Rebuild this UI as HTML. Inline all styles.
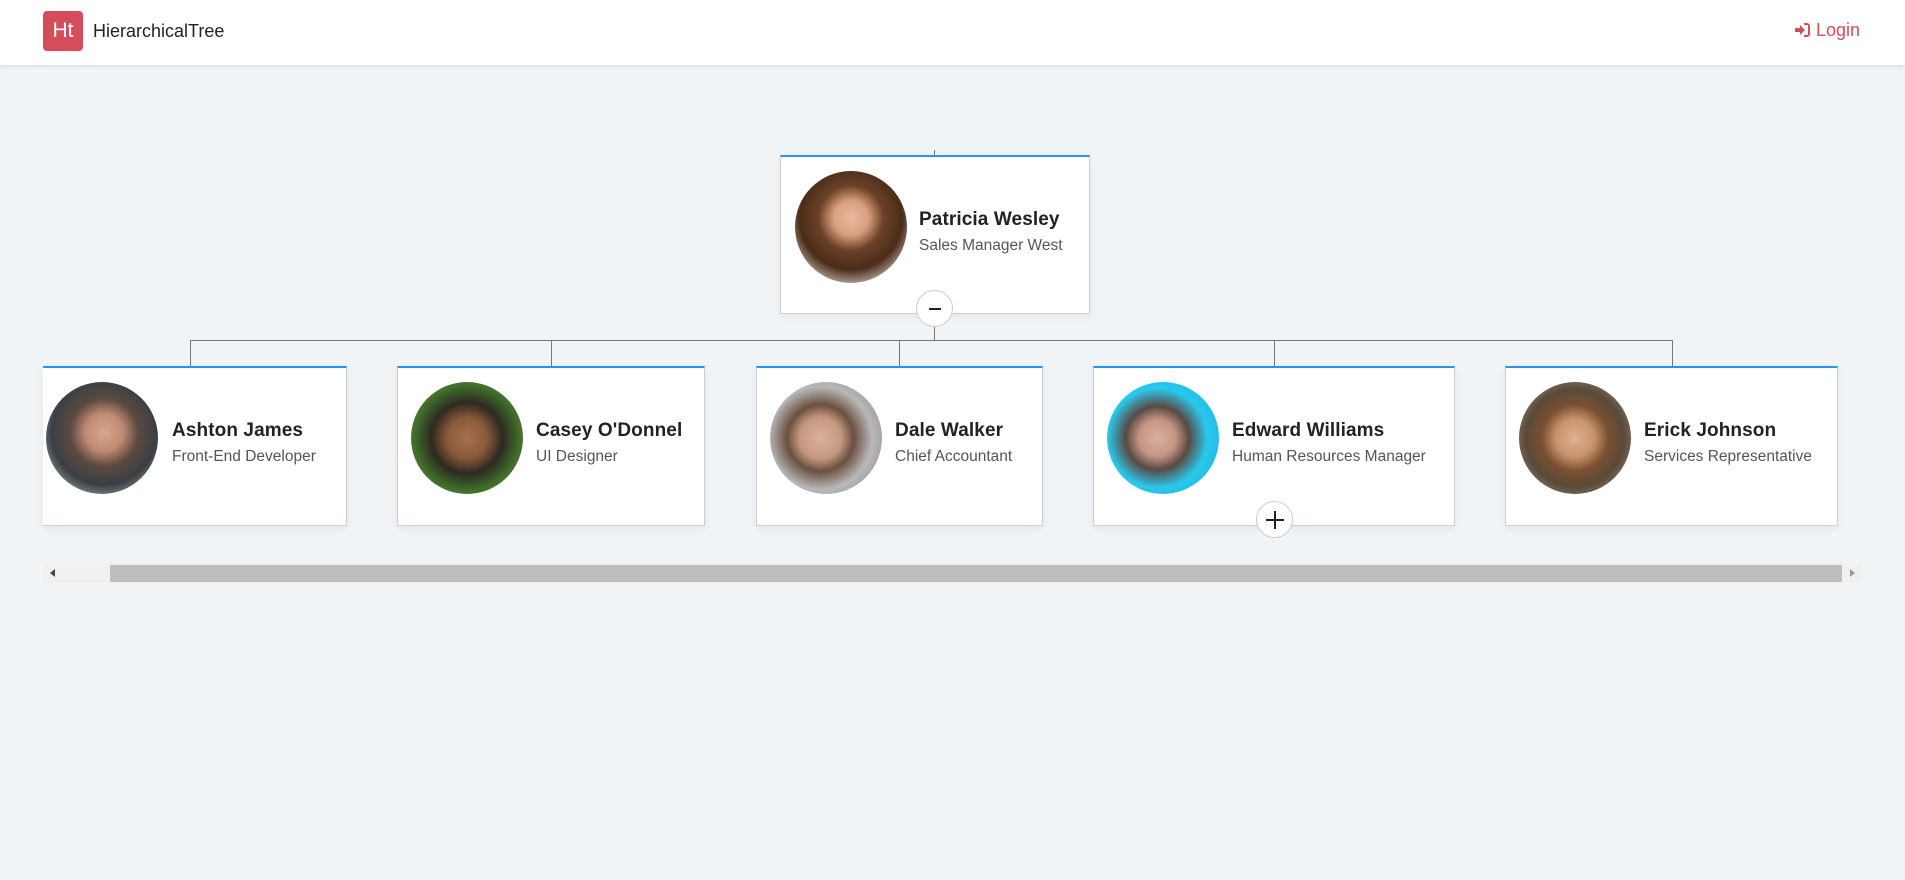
<!DOCTYPE html>
<html><head><meta charset="utf-8"><style>
*{box-sizing:border-box;margin:0;padding:0}
body{width:1905px;height:880px;background:#f1f4f7;font-family:"Liberation Sans",sans-serif;position:relative;overflow:hidden}
.hdr{position:absolute;left:0;top:0;width:1905px;height:65px;background:#fff;box-shadow:0 1px 4px rgba(0,0,0,.12)}
.logo{position:absolute;left:43px;top:11px;width:40px;height:40px;background:#d54d5a;border-radius:4px;color:#fff;font-size:21px;line-height:40px;text-align:center}
.brand{position:absolute;left:93px;top:21px;font-size:18px;color:#222}
.login{position:absolute;left:1794px;top:20px;font-size:18px;color:#d54d5a}
.card{position:absolute;background:#fff;border:1px solid #cfcfcf;border-top:2px solid #2196f3;box-shadow:0 3px 8px rgba(0,0,0,.06)}
.av{position:absolute;width:112px;height:112px;border-radius:50%}
.nm{position:absolute;font-size:19px;font-weight:bold;color:#222;white-space:nowrap;letter-spacing:0.1px}
.ti{position:absolute;font-size:15.5px;color:#555;white-space:nowrap}
.ln{position:absolute;background:#777}
.btn{position:absolute;width:37px;height:37px;border-radius:50%;background:#fff;border:1px solid #ccc}
</style></head><body>
<div class="hdr">
<div class="logo">Ht</div><div class="brand">HierarchicalTree</div>
<div class="login"><svg width="16" height="16" viewBox="0 0 16 16" style="vertical-align:-2px;margin-right:6px"><path d="M1 6h5V3l5 5-5 5v-3H1z" fill="#d54d5a"/><path d="M10 2h3a2 2 0 0 1 2 2v8a2 2 0 0 1-2 2h-3" fill="none" stroke="#d54d5a" stroke-width="2"/></svg>Login</div>
</div>

<div class="ln" style="left:934px;top:150px;width:1px;height:6px"></div>
<div class="ln" style="left:934px;top:325px;width:1px;height:15px"></div>
<div class="ln" style="left:190px;top:340px;width:1483px;height:1px"></div>
<div class="ln" style="left:190px;top:340px;width:1px;height:26px"></div>
<div class="ln" style="left:551px;top:340px;width:1px;height:26px"></div>
<div class="ln" style="left:899px;top:340px;width:1px;height:26px"></div>
<div class="ln" style="left:1274px;top:340px;width:1px;height:26px"></div>
<div class="ln" style="left:1672px;top:340px;width:1px;height:26px"></div>

<div class="card" style="left:780px;top:155px;width:310px;height:159px">
<div class="av" style="left:14px;top:14px;background:radial-gradient(circle at 50% 42%,#e7b9a0 0,#d9a07f 20%,#6b4127 38%,#4a2c1a 60%,#d8cfc4 85%)"></div>
<div class="nm" style="left:138px;top:52px">Patricia Wesley</div>
<div class="ti" style="left:138px;top:80px">Sales Manager West</div>
</div>
<div class="btn" style="left:916px;top:290px"><div style="position:absolute;left:12px;top:17px;width:12px;height:2px;background:#222"></div></div>

<div class="card" style="left:43px;top:366px;width:304px;height:160px;border-left:none">
<div class="av" style="left:3px;top:14px;background:radial-gradient(circle at 52% 45%,#d8a690 0,#c08a72 22%,#5c4a40 40%,#3a3f45 62%,#8a9090 80%)"></div>
<div class="nm" style="left:129px;top:52px">Ashton James</div>
<div class="ti" style="left:129px;top:80px">Front-End Developer</div>
</div>
<div class="card" style="left:397px;top:366px;width:308px;height:160px">
<div class="av" style="left:13px;top:14px;background:radial-gradient(circle at 50% 50%,#a8704e 0,#8a5a3a 25%,#2e2a20 45%,#3d6a2a 65%,#6d8a3a 85%)"></div>
<div class="nm" style="left:138px;top:52px">Casey O'Donnel</div>
<div class="ti" style="left:138px;top:80px">UI Designer</div>
</div>
<div class="card" style="left:756px;top:366px;width:287px;height:160px">
<div class="av" style="left:13px;top:14px;background:radial-gradient(circle at 45% 50%,#d9b29a 0,#c49880 25%,#6a5040 40%,#b8b8b8 62%,#8e8e8e 90%)"></div>
<div class="nm" style="left:138px;top:52px">Dale Walker</div>
<div class="ti" style="left:138px;top:80px">Chief Accountant</div>
</div>
<div class="card" style="left:1093px;top:366px;width:362px;height:160px">
<div class="av" style="left:13px;top:14px;background:radial-gradient(circle at 45% 50%,#d8b0a0 0,#c49584 22%,#5a4a44 38%,#2ac8ec 60%,#14b4e6 90%)"></div>
<div class="nm" style="left:138px;top:52px">Edward Williams</div>
<div class="ti" style="left:138px;top:80px">Human Resources Manager</div>
</div>
<div class="btn" style="left:1256px;top:501px"><div style="position:absolute;left:9px;top:17px;width:18px;height:2px;background:#222"></div><div style="position:absolute;left:17px;top:9px;width:2px;height:18px;background:#222"></div></div>
<div class="card" style="left:1505px;top:366px;width:333px;height:160px">
<div class="av" style="left:13px;top:14px;background:radial-gradient(circle at 50% 50%,#e0b090 0,#c8926e 24%,#7a5030 42%,#5a4a3a 62%,#9a8a7a 88%)"></div>
<div class="nm" style="left:138px;top:52px">Erick Johnson</div>
<div class="ti" style="left:138px;top:80px">Services Representative</div>
</div>

<div style="position:absolute;left:43px;top:563px;width:1819px;height:20px;background:#f0f0f0">
<div style="position:absolute;left:67px;top:2px;width:1732px;height:17px;background:#bebebe"></div>
<div style="position:absolute;left:7px;top:6px;width:0;height:0;border-top:4px solid transparent;border-bottom:4px solid transparent;border-right:5px solid #444"></div>
<div style="position:absolute;right:7px;top:6px;width:0;height:0;border-top:4px solid transparent;border-bottom:4px solid transparent;border-left:5px solid #999"></div>
</div>
</body></html>
